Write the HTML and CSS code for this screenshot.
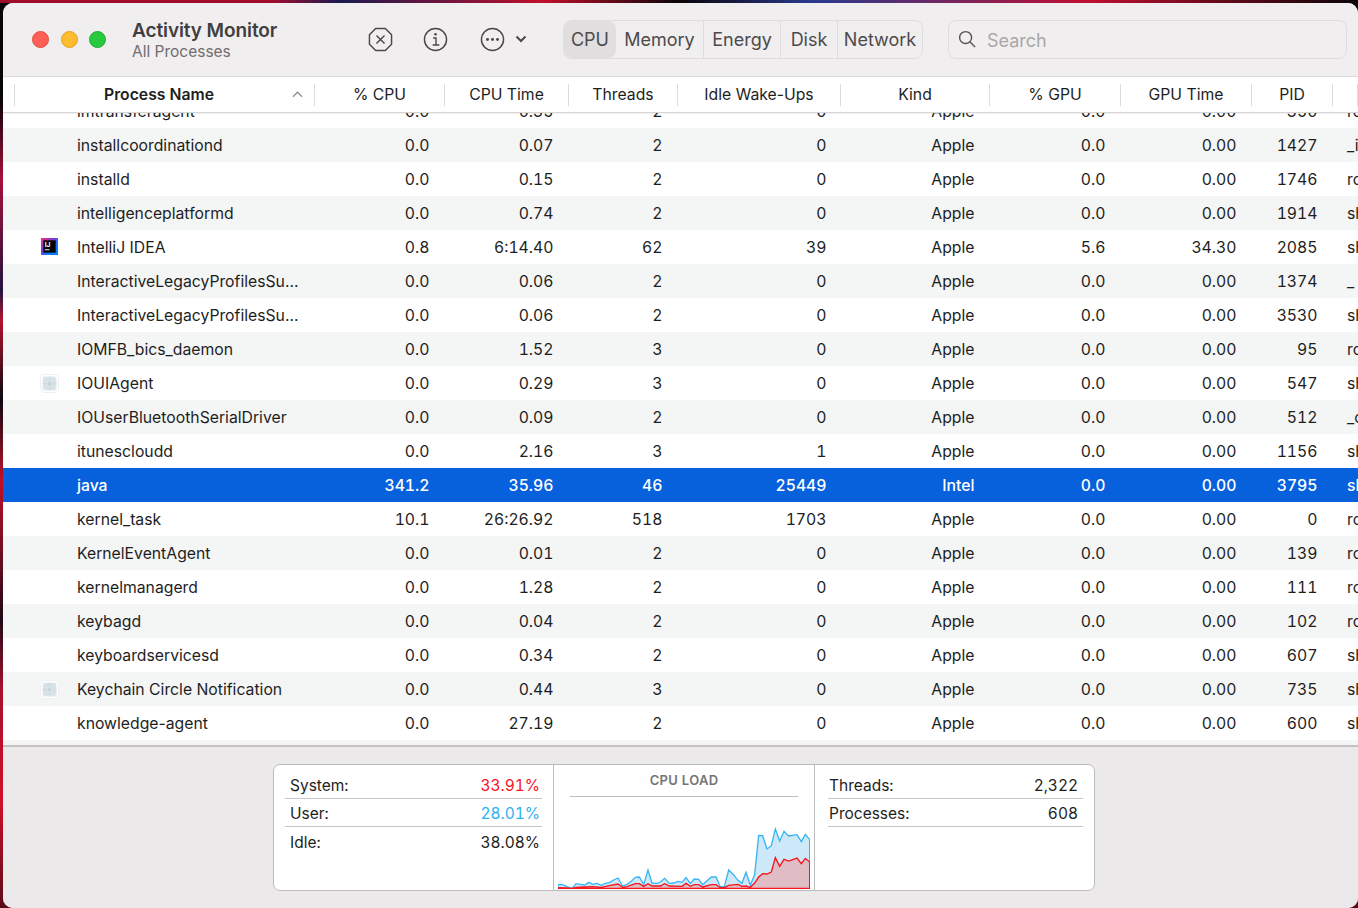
FILE: index.html
```html
<!DOCTYPE html>
<html lang="en">
<head>
<meta charset="utf-8">
<title>Activity Monitor</title>
<link rel="stylesheet" href="styles.css">
</head>
<body>
<div class="window">
  <header class="toolbar">
    <div class="lights"><i class="light red"></i><i class="light yellow"></i><i class="light green"></i></div>
    <div class="title"><div class="title-main">Activity Monitor</div><div class="title-sub">All Processes</div></div>
    <div class="actions">
      <svg class="ico" viewBox="0 0 26 26"><path d="M8 1.500h10L24.500 8v10L18 24.500H8L1.500 18V8z"/><path d="M8.800 8.800l8.400 8.400M17.200 8.800l-8.400 8.400"/></svg>
      <svg class="ico" viewBox="0 0 26 26"><circle cx="13" cy="13" r="11.500"/><circle class="dot" cx="13" cy="7.500" r="1.300"/><path d="M10.500 11.500H13.500V18.500M10 18.800h7"/></svg>
      <div class="more">
        <svg class="ico" viewBox="0 0 26 26"><circle cx="13" cy="13" r="11.500"/><circle class="dot" cx="7.800" cy="13" r="1.500"/><circle class="dot" cx="13" cy="13" r="1.500"/><circle class="dot" cx="18.200" cy="13" r="1.500"/></svg>
        <svg class="chev" viewBox="0 0 12 8"><path d="M1.500 1.500L6 6l4.500-4.500"/></svg>
      </div>
    </div>
    <nav class="tabs">
      <span class="tab cpu active">CPU</span><span class="tab mem">Memory</span><span class="tab ene">Energy</span><span class="tab dis">Disk</span><span class="tab net">Network</span>
    </nav>
    <div class="search">
      <svg class="lens" viewBox="0 0 20 20"><circle cx="8" cy="8" r="6.300"/><path d="M12.700 12.700L18 18"/></svg>
      <span>Search</span>
    </div>
  </header>

  <div class="thead">
    <span class="name hname">Process Name<svg class="sort" viewBox="0 0 12 7"><path d="M1 6l5-5 5 5"/></svg></span>
    <span class="hc">% CPU</span><span class="hc">CPU Time</span><span class="hc">Threads</span><span class="hc">Idle Wake-Ups</span><span class="hc">Kind</span><span class="hc">% GPU</span><span class="hc">GPU Time</span><span class="hc">PID</span><span class="hc"></span>
  </div>

  <div class="tbody">
    <div class="data first"><span class="name">imtransferagent</span><span>0.0</span><span>0.35</span><span>2</span><span>0</span><span>Apple</span><span>0.0</span><span>0.00</span><span>350</span><span class="user">ro</span></div>
    <div class="data alt"><span class="name">installcoordinationd</span><span>0.0</span><span>0.07</span><span>2</span><span>0</span><span>Apple</span><span>0.0</span><span>0.00</span><span>1427</span><span class="user">_i</span></div>
    <div class="data"><span class="name">installd</span><span>0.0</span><span>0.15</span><span>2</span><span>0</span><span>Apple</span><span>0.0</span><span>0.00</span><span>1746</span><span class="user">ro</span></div>
    <div class="data alt"><span class="name">intelligenceplatformd</span><span>0.0</span><span>0.74</span><span>2</span><span>0</span><span>Apple</span><span>0.0</span><span>0.00</span><span>1914</span><span class="user">sh</span></div>
    <div class="data"><span class="name">
      <svg class="appicon ij" viewBox="0 0 18 18"><defs><linearGradient id="ij" x1="0" y1="0" x2="1" y2="1"><stop offset="0" stop-color="#fe2f6d"/><stop offset=".4" stop-color="#7a3be0"/><stop offset=".65" stop-color="#087cfa"/></linearGradient></defs><rect width="18" height="18" fill="url(#ij)"/><rect x="2.500" y="2.500" width="13" height="13" fill="#000"/><text x="4" y="9.500" class="ijtext">IJ</text><rect x="4" y="12" width="5" height="1" fill="#fff"/></svg>
      IntelliJ IDEA</span><span>0.8</span><span>6:14.40</span><span>62</span><span>39</span><span>Apple</span><span>5.6</span><span>34.30</span><span>2085</span><span class="user">sh</span></div>
    <div class="data alt"><span class="name">InteractiveLegacyProfilesSu...</span><span>0.0</span><span>0.06</span><span>2</span><span>0</span><span>Apple</span><span>0.0</span><span>0.00</span><span>1374</span><span class="user">_</span></div>
    <div class="data"><span class="name">InteractiveLegacyProfilesSu...</span><span>0.0</span><span>0.06</span><span>2</span><span>0</span><span>Apple</span><span>0.0</span><span>0.00</span><span>3530</span><span class="user">sh</span></div>
    <div class="data alt"><span class="name">IOMFB_bics_daemon</span><span>0.0</span><span>1.52</span><span>3</span><span>0</span><span>Apple</span><span>0.0</span><span>0.00</span><span>95</span><span class="user">ro</span></div>
    <div class="data"><span class="name">
      <svg class="appicon blank" viewBox="0 0 19 19"><rect x=".5" y=".5" width="18" height="18" rx="3.500" fill="#fff" stroke="#f0f0f0"/><rect x="2.500" y="2.500" width="14" height="14" rx="2.500" fill="#dce6ea"/><path d="M9.500 2.500v14M2.500 9.500h14" stroke="#d0dce1" stroke-width=".6"/><circle cx="9.500" cy="9.500" r="5" fill="none" stroke="#cbd8de"/><circle cx="9.500" cy="9.500" r="2.300" fill="#c8d6dc"/></svg>
      IOUIAgent</span><span>0.0</span><span>0.29</span><span>3</span><span>0</span><span>Apple</span><span>0.0</span><span>0.00</span><span>547</span><span class="user">sh</span></div>
    <div class="data alt"><span class="name">IOUserBluetoothSerialDriver</span><span>0.0</span><span>0.09</span><span>2</span><span>0</span><span>Apple</span><span>0.0</span><span>0.00</span><span>512</span><span class="user">_c</span></div>
    <div class="data"><span class="name">itunescloudd</span><span>0.0</span><span>2.16</span><span>3</span><span>1</span><span>Apple</span><span>0.0</span><span>0.00</span><span>1156</span><span class="user">sh</span></div>
    <div class="data selected"><span class="name">java</span><span>341.2</span><span>35.96</span><span>46</span><span>25449</span><span>Intel</span><span>0.0</span><span>0.00</span><span>3795</span><span class="user">sh</span></div>
    <div class="data"><span class="name">kernel_task</span><span>10.1</span><span>26:26.92</span><span>518</span><span>1703</span><span>Apple</span><span>0.0</span><span>0.00</span><span>0</span><span class="user">ro</span></div>
    <div class="data alt"><span class="name">KernelEventAgent</span><span>0.0</span><span>0.01</span><span>2</span><span>0</span><span>Apple</span><span>0.0</span><span>0.00</span><span>139</span><span class="user">ro</span></div>
    <div class="data"><span class="name">kernelmanagerd</span><span>0.0</span><span>1.28</span><span>2</span><span>0</span><span>Apple</span><span>0.0</span><span>0.00</span><span>111</span><span class="user">ro</span></div>
    <div class="data alt"><span class="name">keybagd</span><span>0.0</span><span>0.04</span><span>2</span><span>0</span><span>Apple</span><span>0.0</span><span>0.00</span><span>102</span><span class="user">ro</span></div>
    <div class="data"><span class="name">keyboardservicesd</span><span>0.0</span><span>0.34</span><span>2</span><span>0</span><span>Apple</span><span>0.0</span><span>0.00</span><span>607</span><span class="user">sh</span></div>
    <div class="data alt"><span class="name">
      <svg class="appicon blank" viewBox="0 0 19 19"><rect x=".5" y=".5" width="18" height="18" rx="3.500" fill="#fff" stroke="#f0f0f0"/><rect x="2.500" y="2.500" width="14" height="14" rx="2.500" fill="#dce6ea"/><path d="M9.500 2.500v14M2.500 9.500h14" stroke="#d0dce1" stroke-width=".6"/><circle cx="9.500" cy="9.500" r="5" fill="none" stroke="#cbd8de"/><circle cx="9.500" cy="9.500" r="2.300" fill="#c8d6dc"/></svg>
      Keychain Circle Notification</span><span>0.0</span><span>0.44</span><span>3</span><span>0</span><span>Apple</span><span>0.0</span><span>0.00</span><span>735</span><span class="user">sh</span></div>
    <div class="data"><span class="name">knowledge-agent</span><span>0.0</span><span>27.19</span><span>2</span><span>0</span><span>Apple</span><span>0.0</span><span>0.00</span><span>600</span><span class="user">sh</span></div>
    <div class="data alt"></div>
  </div>

  <footer class="footer">
    <div class="stats">
      <div class="cell left">
        <div class="stat lined"><span>System:</span><span class="sys">33.91%</span></div>
        <div class="stat lined"><span>User:</span><span class="usr">28.01%</span></div>
        <div class="stat"><span>Idle:</span><span>38.08%</span></div>
      </div>
      <div class="cell mid">
        <div class="load-title">CPU LOAD</div>
        <svg class="graph" viewBox="38 200 756 200">
          <polygon class="fill-blue" points="38,396 38,385 52,385 65,391 80,396 92,382 105,384 118,386 130,378 142,384 155,381 168,387 180,381 192,379 205,371 218,365 232,389 245,384 258,375 270,363 282,362 295,384 308,341 320,380 335,381 345,377 358,366 372,381 385,380 398,375 410,378 422,364 435,381 447,368 460,369 472,385 485,373 498,362 512,362 525,391 537,391 550,341 562,352 578,372 590,381 602,348 615,386 628,355 640,237 652,238 665,278 678,268 690,218 703,254 716,225 730,239 755,235 768,256 780,234 793,250 793,396"/>
          <polygon class="fill-red" points="38,396 38,394 65,395 80,396 92,393 118,392 142,391 168,393 192,388 218,383 232,393 245,391 270,382 282,382 295,390 308,382 320,389 345,389 358,382 372,389 410,390 422,381 435,390 447,385 460,385 472,392 498,385 512,385 525,394 537,394 550,387 578,384 590,390 602,389 615,393 628,380 640,362 652,352 665,353 678,347 690,304 703,330 716,309 730,314 755,305 768,322 780,306 793,317 793,396"/>
          <polyline class="line-blue" points="38,396 38,385 52,385 65,391 80,396 92,382 105,384 118,386 130,378 142,384 155,381 168,387 180,381 192,379 205,371 218,365 232,389 245,384 258,375 270,363 282,362 295,384 308,341 320,380 335,381 345,377 358,366 372,381 385,380 398,375 410,378 422,364 435,381 447,368 460,369 472,385 485,373 498,362 512,362 525,391 537,391 550,341 562,352 578,372 590,381 602,348 615,386 628,355 640,237 652,238 665,278 678,268 690,218 703,254 716,225 730,239 755,235 768,256 780,234 793,250 793,396"/>
          <polyline class="line-red" points="38,396 38,394 65,395 80,396 92,393 118,392 142,391 168,393 192,388 218,383 232,393 245,391 270,382 282,382 295,390 308,382 320,389 345,389 358,382 372,389 410,390 422,381 435,390 447,385 460,385 472,392 498,385 512,385 525,394 537,394 550,387 578,384 590,390 602,389 615,393 628,380 640,362 652,352 665,353 678,347 690,304 703,330 716,309 730,314 755,305 768,322 780,306 793,317 793,396 38,396"/>
        </svg>
      </div>
      <div class="cell right">
        <div class="stat lined"><span>Threads:</span><span>2,322</span></div>
        <div class="stat lined"><span>Processes:</span><span>608</span></div>
      </div>
    </div>
  </footer>
</div>
</body>
</html>
```

FILE: styles.css
```css
* { box-sizing: border-box; }
html, body { margin: 0; height: 100%; overflow: hidden; }
body {
  padding: 3px 0 0 3px;
  font-family: Inter, "Liberation Sans", sans-serif;
  font-size: 15.750px;
  color: #1e1e1e;
  background-color: #0a0508;
  background-image:
    linear-gradient(90deg, #a00d2c 0 20%, #1a1a50 25%, #c0102a 40%, #0a0508 50%, #2a3a90 60%, #c01030 80%, #0a0508 100%),
    linear-gradient(180deg, #0a0508 0, #0a0508 100px, #a8103a 180px, #20153f 290px, #b3142d 320px, #0a0a12 400px, #c01028 480px, #200a18 620px, #a8102c 690px, #d0102a 800px, #5a0a18 908px);
  background-size: 100% 3px, 100% 100%;
  background-repeat: no-repeat;
}
.window {
  width: 1355px;
  height: 905px;
  border-radius: 10px;
  background: #ece9ea;
  overflow: hidden;
  display: flex;
  flex-direction: column;
}
.toolbar {
  height: 74px;
  flex: none;
  display: flex;
  align-items: center;
  background: #f1eeef;
  border-bottom: 1px solid #dcdadb;
  padding: 0 0 1px 29px;
}
.lights { display: flex; gap: 11.500px; width: 100px; }
.light { width: 17px; height: 17px; border-radius: 50%; display: block; }
.red { background: #fe5f57; border: 1px solid #e5483f; }
.yellow { background: #febc2e; border: 1px solid #e2a11d; }
.green { background: #27c93f; border: 1px solid #1fae33; }
.title { width: 236px; padding-top: 1px; }
.title-main { font-size: 19px; font-weight: 600; color: #403e3f; line-height: 23px; letter-spacing: -.1px; }
.title-sub { font-size: 15.500px; color: #6f6d6e; line-height: 19px; }
.actions { display: flex; align-items: center; gap: 29.500px; width: 195px; }
.ico { width: 25px; height: 25px; fill: none; stroke: #4a4848; stroke-width: 1.500; flex: none; }
.ico .dot { fill: #4a4848; stroke: none; }
.more { display: flex; align-items: center; gap: 10px; margin-left: 3px; }
.chev { width: 12px; height: 8px; fill: none; stroke: #4a4848; stroke-width: 2; }
.tabs {
  width: 360px;
  height: 39px;
  border: 1px solid #dfdcdd;
  border-radius: 8px;
  display: flex;
  align-items: stretch;
  font-size: 18px;
  color: #4c4a4b;
  overflow: hidden;
  flex: none;
}
.tab { display: flex; align-items: center; justify-content: center; border-right: 1px solid #dfdcdd; }
.tab.cpu { width: 52px; border-right: 0; }
.tab.mem { width: 88px; }
.tab.ene { width: 77px; }
.tab.dis { width: 57px; }
.tab.net { flex: 1; border-right: 0; }
.tab.active { background: #e1dedf; border-radius: 8px; }
.search {
  width: 399px;
  height: 39px;
  margin-left: 25px;
  border: 1px solid #dfdcdd;
  border-radius: 8px;
  display: flex;
  align-items: center;
  gap: 10px;
  padding: 0 0 0 9px;
  font-size: 18px;
  color: #a9a7a8;
  flex: none;
}
.search span { padding-top: 2px; }
.lens { width: 19px; height: 19px; fill: none; stroke: #555; stroke-width: 1.500; }
.thead, .data {
  display: grid;
  align-items: center;
}
.thead {
  grid-template-columns: 311px 130px 124px 109px 163px 149px 131px 131px 81px 1fr;
  padding-left: 1px;
  height: 36px;
  flex: none;
  background: #fff;
  border-bottom: 1px solid #d6d6d6;
  position: relative;
  z-index: 1;
  box-shadow: 0 1px 1px rgba(0,0,0,.05);
}
.hc { height: 22px; line-height: 21px; text-align: center; border-right: 1px solid #dcdcdc; }
.hname {
  height: 22px;
  line-height: 21px;
  margin-left: 10px;
  border-left: 1px solid #dcdcdc;
  border-right: 1px solid #dcdcdc;
  font-weight: 600;
  text-align: center;
  position: relative;
  padding-right: 11px;
}
.sort { position: absolute; right: 11px; top: 7px; width: 11px; height: 7px; fill: none; stroke: #8f8f8f; stroke-width: 1.400; }
.tbody { flex: none; height: 632px; overflow: hidden; background: #fff; }
.data {
  grid-template-columns: 312px 129px 124px 109px 164px 148px 131px 131px 81px 1fr;
  height: 34px;
  text-align: right;
  font-variant-numeric: tabular-nums;
}
.data > span { padding-right: 14.500px; white-space: nowrap; overflow: hidden; }
.data > .name { text-align: left; padding-left: 74px; position: relative; overflow: visible; font-variant-numeric: normal; }
.data > .user { text-align: left; padding: 0 0 0 15px; }
.first { margin-top: -19px; }
.alt { background: #f4f5f5; }
.selected { background: #0761dd; color: #fff; font-weight: 500; }
.appicon { position: absolute; }
.ij { left: 38px; top: 0; width: 17px; height: 17px; }
.blank { left: 37px; top: 0; width: 19px; height: 19px; }
.ijtext { font-size: 7px; font-weight: 700; fill: #fff; font-family: Inter, sans-serif; }
.footer {
  flex: 1;
  border-top: 2px solid #c4c2c3;
  background: #ece9ea;
  padding: 17px 0 0 270px;
}
.stats {
  width: 822px;
  height: 127px;
  background: #fff;
  border: 1.500px solid #bdbbbc;
  border-radius: 7px;
  display: grid;
  grid-template-columns: 280px 261px 1fr;
  overflow: hidden;
  font-variant-numeric: tabular-nums;
}
.cell { min-width: 0; }
.left { padding: 6px 11px 0 11px; border-right: 1.500px solid #bdbbbc; }
.left .stat { padding: 0 2px 0 5px; }
.right { padding: 6px 11px 0 13px; }
.right .stat { padding: 0 5px 0 1px; }
.mid { padding-left: 3px; padding-right: 3px; border-right: 1.500px solid #bdbbbc; display: flex; flex-direction: column; }
.stat { display: flex; justify-content: space-between; height: 28px; line-height: 29px; font-size: 15.500px; }
.stat:last-child:not(.lined) { line-height: 31px; }
.lined { border-bottom: 1.500px solid #c6c6c6; }
.sys { color: #f8141c; }
.usr { color: #2db1ef; }
.load-title {
  margin: 0 13px;
  height: 32px;
  line-height: 30px;
  text-align: center;
  font-size: 13px;
  font-weight: 600;
  letter-spacing: .3px;
  color: #757575;
  border-bottom: 1.500px solid #bdbdbd;
}
.graph { width: 252px; height: 66.700px; margin-top: auto; margin-left: 1px; display: block; }
.fill-blue { fill: #cde8f8; stroke: none; }
.fill-red { fill: #e0bcc4; stroke: none; }
.line-blue { fill: none; stroke: #38b4f2; stroke-width: 4; }
.line-red { fill: none; stroke: #f8141c; stroke-width: 4; }
```
